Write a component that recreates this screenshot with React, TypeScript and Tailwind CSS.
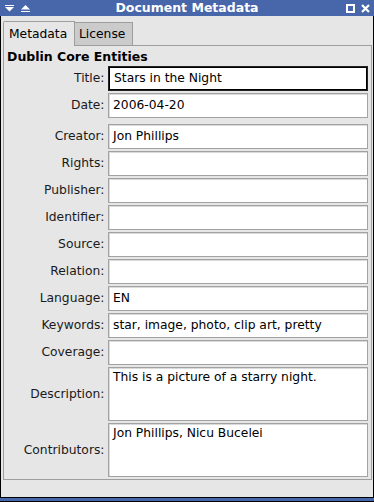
import React from "react";

const FONT = { fontFamily: '"DejaVu Sans", Verdana, sans-serif' };

type Row = { label: string; value?: string; focused?: boolean; tall?: boolean; extra?: boolean };

const rows: Row[] = [
  { label: "Title:", value: "Stars in the Night", focused: true },
  { label: "Date:", value: "2006-04-20", extra: true },
  { label: "Creator:", value: "Jon Phillips" },
  { label: "Rights:" },
  { label: "Publisher:" },
  { label: "Identifier:" },
  { label: "Source:" },
  { label: "Relation:" },
  { label: "Language:", value: "EN" },
  { label: "Keywords:", value: "star, image, photo, clip art, pretty" },
  { label: "Coverage:" },
  { label: "Description:", value: "This is a picture of a starry night.", tall: true },
  { label: "Contributors:", value: "Jon Phillips, Nicu Bucelei", tall: true },
];

function FieldRow({ r }: { r: Row }) {
  const h = r.tall ? "h-[54px]" : "h-[25px]";
  const box = r.focused
    ? "border border-[#222] shadow-[inset_0_0_0_1px_#000]"
    : "border border-[#a2a2a2] shadow-[inset_1px_1px_0_#dadada]";
  return (
    <div className={`flex ${h} ${r.extra ? "mb-[4px]" : ""}`}>
      <div className="w-[101px] shrink-0 flex items-center justify-end text-[12.3px] text-[#1a1a1a] leading-none pr-[0.5px]">
        {r.label}
      </div>
      <div
        className={`ml-[3px] flex-1 bg-white ${box} px-[4px] text-[12.3px] text-black leading-[15px] flex ${
          r.tall ? "items-start pt-[2px]" : "items-center"
        } ${r.focused ? "pl-[5px]" : ""}`}
      >
        {r.value ?? ""}
      </div>
    </div>
  );
}

export default function App() {
  return (
    <div className="w-[374px] h-[502px] flex flex-col bg-[#e6e6e6] overflow-hidden" style={FONT}>
      {/* title bar */}
      <div className="h-[16px] bg-[#4866aa] grid grid-cols-[1fr_auto_1fr] items-center shrink-0">
        <div className="flex items-center gap-[7px] pl-[5px]">
          <svg width="9" height="7" viewBox="0 0 9 7" className="block">
            <rect x="0" y="0" width="9" height="1" fill="#fff" />
            <polygon points="0,2 9,2 4.5,6.5" fill="#fff" />
          </svg>
          <svg width="9" height="7" viewBox="0 0 9 7" className="block">
            <polygon points="0,4.5 9,4.5 4.5,0" fill="#fff" />
            <rect x="0" y="6" width="9" height="1" fill="#fff" />
          </svg>
        </div>
        <div className="text-white font-bold text-[12.5px] leading-none">Document Metadata</div>
        <div className="flex items-center justify-end gap-[6px] pr-[4px]">
          <svg width="9" height="9" viewBox="0 0 9 9" className="block">
            <rect x="1" y="1" width="7" height="7" fill="none" stroke="#fff" strokeWidth="2" />
          </svg>
          <svg width="9" height="9" viewBox="0 0 9 9" className="block">
            <path d="M1 1 L8 8 M8 1 L1 8" stroke="#fff" strokeWidth="2.2" />
          </svg>
        </div>
      </div>

      {/* body */}
      <div className="flex-1 flex flex-col border-x border-black pl-[2px] pr-[1px] pt-[4px] pb-[17px]">
        {/* tabs */}
        <div className="flex items-end h-[25px] relative z-10">
          <div className="w-[72px] h-[25px] -mb-px bg-[#e6e6e6] border border-b-0 border-[#9e9e9e] rounded-tl-[2px] flex items-center pl-[5px] text-[12.3px] text-black">
            Metadata
          </div>
          <div className="w-[58px] h-[23px] bg-[#cbcbcb] border border-l-0 border-b-0 border-[#9e9e9e] flex items-center pl-[4px] text-[12.3px] text-black">
            License
          </div>
        </div>
        {/* panel */}
        <div className="flex-1 border border-[#9e9e9e] flex flex-col pr-[3px]">
          <div className="h-[20px] pl-[3px] pt-[3px] font-bold text-[12.5px] leading-[15px] text-black">
            Dublin Core Entities
          </div>
          <div className="flex flex-col gap-[2px]">
            {rows.map((r) => (
              <FieldRow key={r.label} r={r} />
            ))}
          </div>
        </div>
      </div>

      {/* bottom frame */}
      <div className="h-[5px] shrink-0 bg-[#4866aa] border-y border-black" />
    </div>
  );
}
